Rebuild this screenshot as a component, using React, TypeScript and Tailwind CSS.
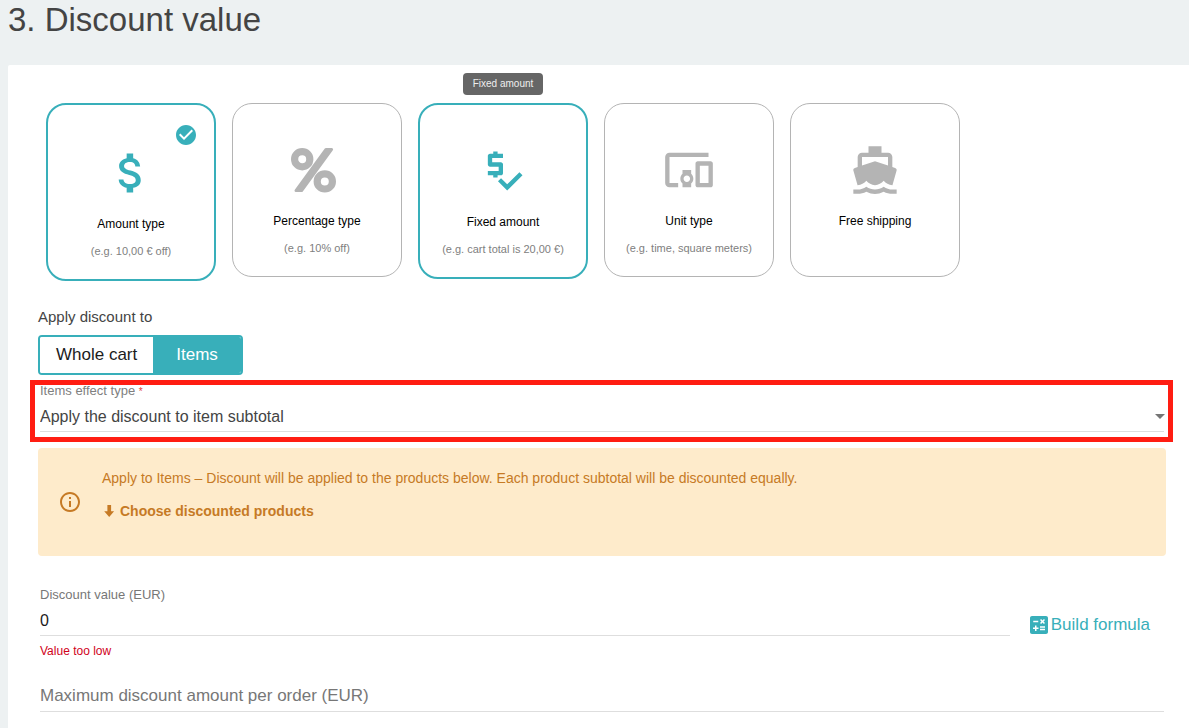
import { useState, type ComponentType } from 'react';
import clsx from 'clsx';
import {
  MdArrowDropDown,
  MdAttachMoney,
  MdCalculate,
  MdCheckCircle,
  MdDevicesOther,
  MdDirectionsBoat,
  MdInfoOutline,
  MdPriceCheck,
} from 'react-icons/md';

type DiscountType = {
  id: string;
  title: string;
  hint?: string;
  icon: ComponentType<{ className?: string }>;
};

function PercentIcon({ className }: { className?: string }) {
  return (
    <svg viewBox="0 0 52 52" className={className} fill="none" stroke="currentColor" aria-hidden="true">
      <circle cx="11.2" cy="15.2" r="7.6" strokeWidth="7.2" />
      <circle cx="33.8" cy="37.4" r="7.6" strokeWidth="7.2" />
      <path d="M5 46.6h5.6L40.6 5.4H35z" fill="currentColor" strokeWidth="3" strokeLinejoin="round" />
    </svg>
  );
}

const discountTypes: DiscountType[] = [
  { id: 'amount', title: 'Amount type', hint: '(e.g. 10,00 € off)', icon: MdAttachMoney },
  { id: 'percentage', title: 'Percentage type', hint: '(e.g. 10% off)', icon: PercentIcon },
  { id: 'fixed', title: 'Fixed amount', hint: '(e.g. cart total is 20,00 €)', icon: MdPriceCheck },
  { id: 'unit', title: 'Unit type', hint: '(e.g. time, square meters)', icon: MdDevicesOther },
  { id: 'shipping', title: 'Free shipping', icon: MdDirectionsBoat },
];

function TypeCard({ type, selected, hovered, onSelect, onHover }: {
  type: DiscountType;
  selected: boolean;
  hovered: boolean;
  onSelect: () => void;
  onHover: () => void;
}) {
  const Icon = type.icon;
  const active = selected || hovered;

  return (
    <button
      type="button"
      aria-pressed={selected}
      onClick={onSelect}
      onMouseEnter={onHover}
      className={clsx(
        'relative flex w-[170px] shrink-0 flex-col items-center rounded-[20px] bg-white pb-5',
        active ? 'border-2 border-[#38afba] text-[#38afba]' : 'border border-[#b4b4b4] text-[#b4b4b4]',
        selected ? 'pt-[42px]' : 'pt-10',
      )}
    >
      {hovered && (
        <span className="absolute -top-8 rounded bg-[#666] px-2.5 text-[10px] leading-[22px] whitespace-nowrap text-[#eee]">
          {type.title}
        </span>
      )}
      {selected && <MdCheckCircle className="absolute top-[18px] right-4 size-6" />}
      <Icon className="size-[52px]" />
      <span className="mt-[17px] text-xs leading-4 text-black">{type.title}</span>
      <span className="mt-[11px] min-h-4 text-[11px] leading-4 whitespace-nowrap text-[#808080]">{type.hint}</span>
    </button>
  );
}

function ScopeToggle({ scope, onChange }: { scope: string; onChange: (scope: string) => void }) {
  return (
    <div className="flex h-10 w-fit overflow-hidden rounded border-2 border-[#38afba] text-[17px]">
      <button
        type="button"
        onClick={() => onChange('cart')}
        className={clsx('px-4', scope === 'cart' ? 'bg-[#38afba] text-white' : 'bg-white text-[#1c1c1c]')}
      >
        Whole cart
      </button>
      <button
        type="button"
        onClick={() => onChange('items')}
        className={clsx('px-[23px]', scope === 'items' ? 'bg-[#38afba] text-white' : 'bg-white text-[#1c1c1c]')}
      >
        Items
      </button>
    </div>
  );
}

function EffectTypeField() {
  return (
    <div className="mt-[5px] -mr-[7px] -ml-2 border-[5px] border-[#ff1d12] pr-1 pb-[5px] pl-[5px]">
      <label htmlFor="effect-type" className="block text-[13px] leading-3 text-[#808080]">
        Items effect type <span className="text-[10px] text-[#e0453c]">*</span>
      </label>
      <div className="relative">
        <select
          id="effect-type"
          className="block h-[34px] w-full appearance-none border-b border-[#dedede] bg-transparent pt-1 text-base text-[#444] outline-none"
        >
          <option>Apply the discount to item subtotal</option>
          <option>Apply the discount to item units</option>
        </select>
        <MdArrowDropDown className="pointer-events-none absolute top-1.5 -right-2 size-6 text-[#757575]" />
      </div>
    </div>
  );
}

function ItemsNotice() {
  return (
    <div className="mt-1.5 flex items-center gap-5 rounded bg-[#feebcb] p-5 text-[#c67a25]">
      <MdInfoOutline className="size-6 shrink-0" />
      <div className="pb-[15px] text-sm">
        <p>
          Apply to Items – Discount will be applied to the products below. Each product subtotal will be discounted
          equally.
        </p>
        <a href="#products" className="mt-[13px] flex items-center gap-1 font-bold">
          <svg viewBox="0 0 14 14" className="size-[14px]" fill="currentColor" aria-hidden="true">
            <path d="M5.4 1h3.7v6.2h3L7.2 13 2.2 7.2h3.2z" />
          </svg>
          Choose discounted products
        </a>
      </div>
    </div>
  );
}

export default function App() {
  const [selectedType, setSelectedType] = useState('amount');
  const [hoveredType, setHoveredType] = useState('fixed');
  const [scope, setScope] = useState('items');
  const [value, setValue] = useState('0');
  const [maximum, setMaximum] = useState('');

  return (
    <div className="flex min-h-screen flex-col bg-[#edf1f2] pl-2 font-['Liberation_Sans',Arial,sans-serif]">
      <h1 className="mb-[25px] text-[33px] leading-10 text-[#444]">3. Discount value</h1>

      <main className="flex-1 rounded-tl-xs bg-white pt-[38px] pr-[23px] pl-[30px]">
        <div className="flex items-start gap-4 pl-2">
          {discountTypes.map((type) => (
            <TypeCard
              key={type.id}
              type={type}
              selected={selectedType === type.id}
              hovered={hoveredType === type.id}
              onSelect={() => setSelectedType(type.id)}
              onHover={() => setHoveredType(type.id)}
            />
          ))}
        </div>

        <h2 className="mt-[26px] mb-2 text-[15px] leading-5 text-[#444]">Apply discount to</h2>
        <ScopeToggle scope={scope} onChange={setScope} />
        <EffectTypeField />
        <ItemsNotice />

        <div className="mt-[31px] flex items-center gap-[17px] pr-4 pl-0.5">
          <div className="flex-1">
            <label htmlFor="discount-value" className="block text-[13px] leading-4 text-[#777]">
              Discount value (EUR)
            </label>
            <input
              id="discount-value"
              value={value}
              onChange={(e) => setValue(e.target.value)}
              className="block h-[33px] w-full border-b border-[#dedede] pt-1 text-base text-[#1c1c1c] outline-none"
            />
            <p className="mt-[7px] text-xs leading-4 text-[#d0021b]">Value too low</p>
          </div>
          <button type="button" className="flex items-center pt-1 text-[17px] text-[#38afba]">
            <MdCalculate className="size-6" />
            Build formula
          </button>
        </div>

        <div className="relative mt-[21px] mr-0.5 ml-0.5">
          {!maximum && (
            <label
              htmlFor="maximum-discount"
              className="pointer-events-none absolute inset-0 text-[17px] leading-8 text-[#777]"
            >
              Maximum discount amount per order (EUR)
            </label>
          )}
          <input
            id="maximum-discount"
            value={maximum}
            onChange={(e) => setMaximum(e.target.value)}
            className="block h-8 w-full border-b border-[#dedede] text-base text-[#1c1c1c] outline-none"
          />
        </div>
      </main>
    </div>
  );
}
